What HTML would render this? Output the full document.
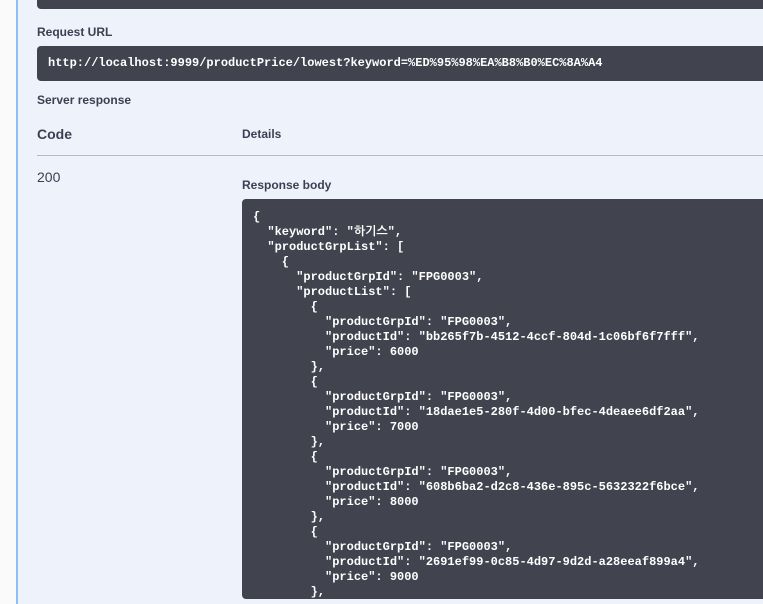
<!DOCTYPE html>
<html><head><meta charset="utf-8"><style>
*{margin:0;padding:0;box-sizing:border-box}
html,body{width:763px;height:604px;overflow:hidden;background:#fafafa}
.main{position:absolute;left:16px;top:0;width:760px;height:604px;background:#eef2fb;border-left:2px solid #8fbef7}
.dark{position:absolute;background:#41444e;border-radius:4px}
.lbl{position:absolute;font-family:"Liberation Sans",sans-serif;font-weight:bold;color:#3b4151;font-size:12px}
pre{font-family:"Liberation Mono","NanumGothic",monospace;font-weight:bold;color:#fff;font-size:12px;line-height:15px;white-space:pre}
</style></head><body>
<div class="main"></div>
<div class="dark" style="left:37px;top:-10px;width:740px;height:19px"></div>
<div class="lbl" style="left:37px;top:25px">Request URL</div>
<div class="dark" style="left:37px;top:46px;width:740px;height:35px"><pre style="position:absolute;left:11px;top:10px">http://localhost:9999/productPrice/lowest?keyword=%ED%95%98%EA%B8%B0%EC%8A%A4</pre></div>
<div class="lbl" style="left:37px;top:93px">Server response</div>
<div class="lbl" style="left:37px;top:126px;font-size:14px">Code</div>
<div class="lbl" style="left:242px;top:127px">Details</div>
<div style="position:absolute;left:37px;top:155px;width:730px;height:1px;background:#b4b9c4"></div>
<div style="position:absolute;left:37px;top:169px;font-family:'Liberation Sans',sans-serif;font-size:14px;color:#3b4151">200</div>
<div class="lbl" style="left:242px;top:178px">Response body</div>
<div class="dark" style="left:242px;top:199px;width:540px;height:400px;overflow:hidden"><pre style="position:absolute;left:11px;top:11px">{
  "keyword": "하기스",
  "productGrpList": [
    {
      "productGrpId": "FPG0003",
      "productList": [
        {
          "productGrpId": "FPG0003",
          "productId": "bb265f7b-4512-4ccf-804d-1c06bf6f7fff",
          "price": 6000
        },
        {
          "productGrpId": "FPG0003",
          "productId": "18dae1e5-280f-4d00-bfec-4deaee6df2aa",
          "price": 7000
        },
        {
          "productGrpId": "FPG0003",
          "productId": "608b6ba2-d2c8-436e-895c-5632322f6bce",
          "price": 8000
        },
        {
          "productGrpId": "FPG0003",
          "productId": "2691ef99-0c85-4d97-9d2d-a28eeaf899a4",
          "price": 9000
        },</pre></div>
</body></html>
